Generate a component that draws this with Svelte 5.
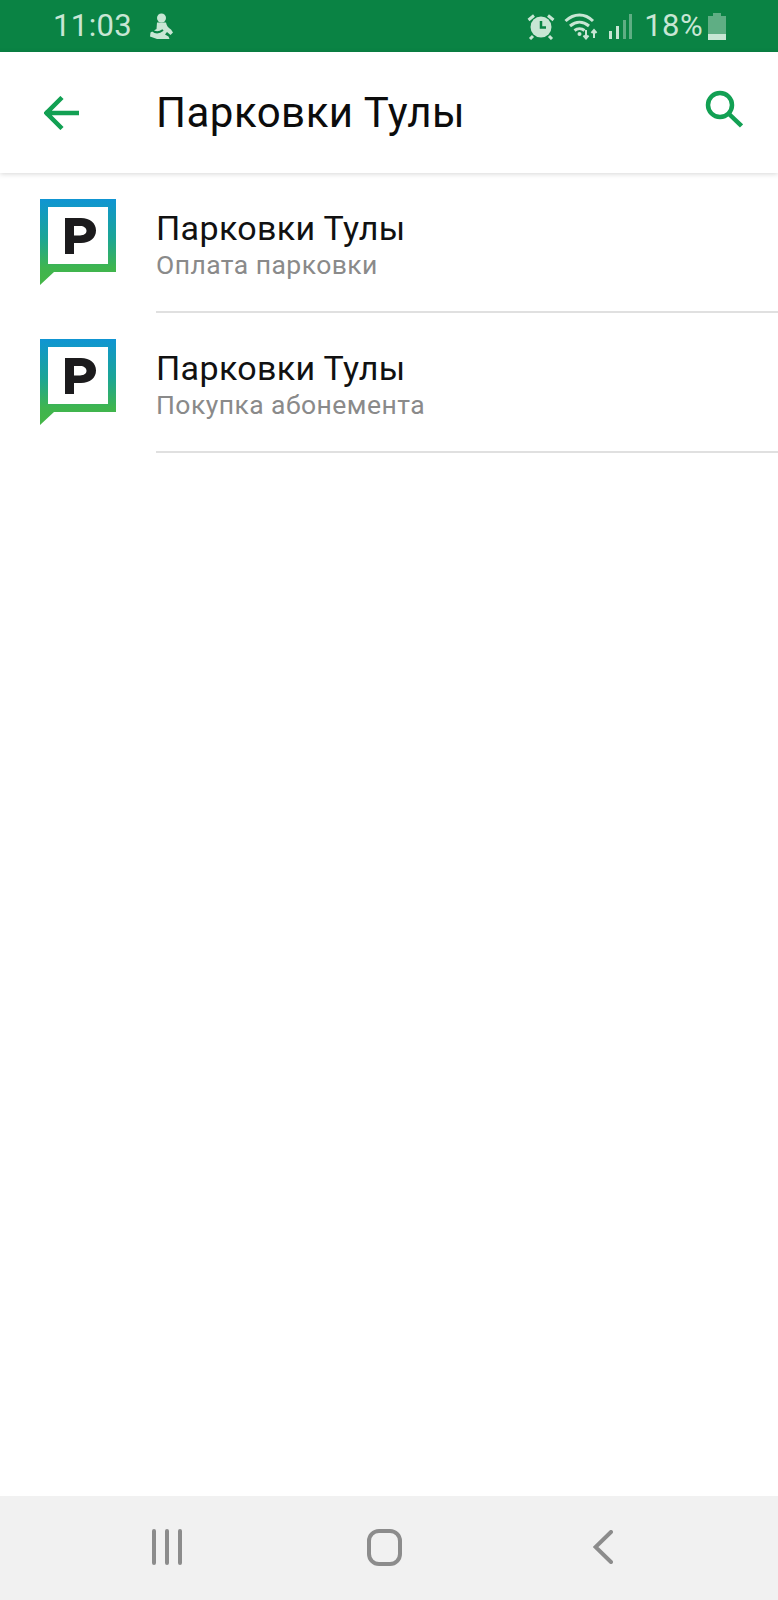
<script lang="ts">
	const items = [
		{ id: 'a', title: 'Парковки Тулы', subtitle: 'Оплата парковки' },
		{ id: 'b', title: 'Парковки Тулы', subtitle: 'Покупка абонемента' }
	];
</script>

<div class="page">
	<div class="status">
		<span class="time">11:03</span>
		<svg class="notif" width="24" height="26" viewBox="0 0 24 26">
			<circle cx="12.500" cy="5" r="4.500" />
			<path d="M8 9.500h9c.5 3 2 5 5 7l2 3-2.500 2.500-3.500-3-2 2.500 3.500 2 1 2.500H8L1 23.500l.5-4 6-3.500z" />
			<path class="cut" d="M3 17c3 3 7 3 11 0" />
		</svg>
		<span class="spacer"></span>
		<svg class="alarm" width="30" height="27" viewBox="0 0 30 27">
			<circle cx="15" cy="14" r="10.500" />
			<path class="hand" d="M15 8v6.500h5" />
			<path class="line" d="M2.500 7 8 2.500M27.500 7 22 2.500M7 23l-3 3M23 23l3 3" />
		</svg>
		<svg class="wifi" width="35" height="27" viewBox="0 0 35 27">
			<path class="line" d="M1.500 8C10 0 21 0 29 8M6 13c6-5 13-5 19 0M10.500 17.500c3-2.500 7-2.500 10 0" />
			<circle cx="15.500" cy="21" r="2" />
			<path class="thin" d="M22 17v8M19.500 22.500l2.500 3 2.500-3M30 25v-8M27.500 20l2.500-3 2.500 3" />
		</svg>
		<svg class="signal" width="23" height="25" viewBox="0 0 23 25">
			<rect x="0" y="17" width="3" height="8" />
			<rect x="7" y="12" width="3" height="13" />
			<rect class="dim" x="14" y="6" width="3" height="19" />
			<rect class="dim" x="20" y="0" width="3" height="25" />
		</svg>
		<span class="pct">18%</span>
		<svg class="battery" width="18" height="27" viewBox="0 0 18 27">
			<rect class="dim" x="5" y="0" width="8" height="3" />
			<rect class="dim" x="0" y="3" width="18" height="18" />
			<rect x="0" y="21" width="18" height="6" />
		</svg>
	</div>

	<header class="bar">
		<svg class="back" width="36" height="34" viewBox="0 0 36 34">
			<path d="M1 17h34M18 1.500 2.500 17 18 32.500" />
		</svg>
		<h1>Парковки Тулы</h1>
		<svg class="search" width="38" height="38" viewBox="0 0 38 38">
			<circle cx="15" cy="15" r="12" />
			<path d="M23.500 23.500 36.500 36" />
		</svg>
	</header>

	<main class="list">
		{#each items as item}
			<div class="row">
				<svg class="logo" width="76" height="86" viewBox="0 0 76 86">
					<defs>
						<linearGradient id="grad-{item.id}" x1="0" y1="0" x2="0" y2="1">
							<stop offset="0" stop-color="#0f95d3" />
							<stop offset="0.45" stop-color="#1ba596" />
							<stop offset="0.8" stop-color="#3fb54f" />
							<stop offset="1" stop-color="#45b647" />
						</linearGradient>
					</defs>
					<path fill="url(#grad-{item.id})" fill-rule="evenodd" d="M0 0h76v73H14L0 86zM8 8v57h60V8z" />
					<path class="glyph" fill-rule="evenodd" d="M25 19h16c9 0 15 5 15 12.500S50 44 41 44h-7v11h-9zM34 27v9.500h6c4 0 6.500-2 6.500-4.700S44 27 40 27z" />
				</svg>
				<div class="text">
					<div class="title">{item.title}</div>
					<div class="sub">{item.subtitle}</div>
				</div>
			</div>
		{/each}
	</main>

	<nav class="nav">
		<svg width="30" height="36" viewBox="0 0 30 36">
			<path d="M2 2v32M15 2v32M28 2v32" />
		</svg>
		<svg class="home" width="35" height="37" viewBox="0 0 35 37">
			<rect x="2" y="2" width="31" height="33" rx="10" />
		</svg>
		<svg width="20" height="34" viewBox="0 0 20 34">
			<path d="M18 2 2.500 17 18 32" />
		</svg>
	</nav>
</div>

<style>
	:global(body) {
		margin: 0;
		background: #fff;
	}

	.page {
		width: 778px;
		height: 1600px;
		display: flex;
		flex-direction: column;
		font-family: Roboto, 'Liberation Sans', sans-serif;
		overflow: hidden;
	}

	.status {
		height: 52px;
		flex-shrink: 0;
		background: #0a8344;
		color: #c8e6d4;
		display: flex;
		align-items: center;
		padding: 0 52px 0 53px;
		box-sizing: border-box;
	}

	.status svg { flex-shrink: 0; }
	.status svg circle, .status svg rect, .notif path { fill: #c8e6d4; }
	.status svg .dim { fill: #5fae84; }

	.time, .pct {
		font-size: 31px;
		line-height: 52px;
		letter-spacing: 0.4px;
	}

	.notif { margin-left: 17px; }
	.notif .cut { fill: none; stroke: #0a8344; stroke-width: 2; }
	.spacer { flex: 1; }

	.alarm .hand { fill: none; stroke: #0a8344; stroke-width: 2.500; }
	.alarm .line, .wifi .line, .wifi .thin {
		fill: none;
		stroke: #c8e6d4;
		stroke-width: 3;
	}
	.wifi .thin { stroke-width: 2; }
	.wifi { margin-left: 8px; }
	.signal { margin-left: 10px; }
	.pct { margin-left: 12px; }
	.battery { margin-left: 5px; }

	.bar {
		height: 121px;
		flex-shrink: 0;
		display: flex;
		align-items: center;
		background: #fff;
		padding: 0 35px 0 44px;
		box-shadow: 0 1px 5px rgba(0, 0, 0, 0.16);
		position: relative;
	}

	.back, .search { fill: none; stroke: #12a053; }
	.back { stroke-width: 4.500; }
	.search { stroke-width: 4.500; margin-bottom: 7px; }

	h1 {
		flex: 1;
		margin: 0 0 0 76px;
		font-size: 42px;
		font-weight: 400;
		color: #0c0c0c;
		letter-spacing: 0.5px;
	}

	.list { flex: 1; }

	.row {
		height: 140px;
		padding-left: 40px;
		display: flex;
		gap: 40px;
		box-sizing: border-box;
	}

	.logo { flex-shrink: 0; margin-top: 26px; }
	.glyph { fill: #1c1b1d; }

	.text {
		flex: 1;
		border-bottom: 2px solid #e0e0e0;
		padding-top: 36px;
	}

	.title {
		font-size: 34px;
		line-height: 38px;
		color: #111;
		letter-spacing: 0.35px;
	}

	.sub {
		font-size: 26.500px;
		line-height: 36px;
		color: #8a8a8a;
		letter-spacing: 0.45px;
	}

	.nav {
		height: 104px;
		flex-shrink: 0;
		background: #f1f1f1;
		display: flex;
		align-items: center;
		padding: 0 165px 0 152px;
		justify-content: space-between;
	}

	.nav svg {
		fill: none;
		stroke: #8c8c8c;
		stroke-width: 4;
		stroke-linecap: round;
		margin-bottom: 2px;
	}

	.nav .home { margin-left: -6px; }
</style>
